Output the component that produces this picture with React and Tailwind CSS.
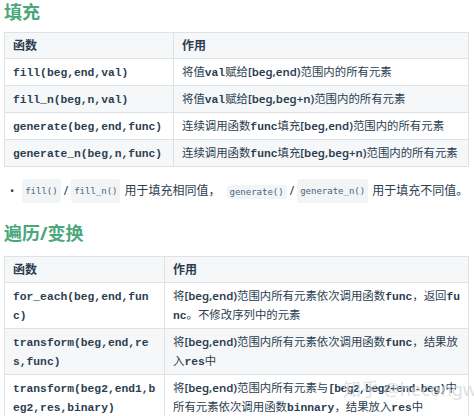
import React from "react";

const sans = { fontFamily: '"Noto Sans", "Noto Sans CJK SC", sans-serif' };

function M({ children, tight }) {
  return (
    <span
      className={tight ? "font-bold text-[11.3px] tracking-[-0.6px]" : "font-bold text-[11.3px]"}
      style={{ fontFamily: '"Liberation Mono", monospace' }}
    >
      {children}
    </span>
  );
}

function L({ children }) {
  return <span className="font-semibold text-[11.4px]">{children}</span>;
}

function IC({ children }) {
  return (
    <code
      className="rounded-[3px] bg-[#f3f4f5] px-[3px] py-[2px] text-[9px] text-[#476582]"
      style={{ fontFamily: '"DejaVu Sans Mono", monospace' }}
    >
      {children}
    </code>
  );
}

function Table({ col, rows }) {
  return (
    <table className="w-[465px] table-fixed border-collapse text-[11.4px] text-[#2c3e50]">
      <colgroup>
        <col style={{ width: col }} />
        <col />
      </colgroup>
      <thead>
        <tr className="bg-[#f6f7f8]">
          <th className="border border-[#dfe2e5] px-2 pt-1 pb-[3px] text-left text-[12px] font-bold leading-[18px]">函数</th>
          <th className="border border-[#dfe2e5] px-2 pt-1 pb-[3px] text-left text-[12px] font-bold leading-[18px]">作用</th>
        </tr>
      </thead>
      <tbody>
        {rows.map((r, i) => (
          <tr key={i} className={i % 2 === 1 ? "bg-[#f6f7f8]" : "bg-white"}>
            <td className="overflow-hidden border border-[#dfe2e5] px-2 pt-1 pb-[3px] align-top leading-[18px] whitespace-nowrap">{r[0]}</td>
            <td className="overflow-hidden border border-[#dfe2e5] px-2 pt-1 pb-[3px] align-top leading-[18px] whitespace-nowrap">{r[1]}</td>
          </tr>
        ))}
      </tbody>
    </table>
  );
}

export default function App() {
  const rows1 = [
    [<M>fill(beg,end,val)</M>, <>将值<M>val</M>赋给<L>[beg,end)</L>范围内的所有元素</>],
    [<M>fill_n(beg,n,val)</M>, <>将值<M>val</M>赋给<L>[beg,beg+n)</L>范围内的所有元素</>],
    [<M>generate(beg,end,func)</M>, <>连续调用函数<M>func</M>填充<L>[beg,end)</L>范围内的所有元素</>],
    [<M>generate_n(beg,n,func)</M>, <>连续调用函数<M>func</M>填充<L>[beg,beg+n)</L>范围内的所有元素</>],
  ];
  const rows2 = [
    [
      <><M>for_each(beg,end,fun</M><br /><M>c)</M></>,
      <>将<L>[beg,end)</L>范围内所有元素依次调用函数<M>func</M>，返回<M>fu</M><br /><M>nc</M>。不修改序列中的元素</>,
    ],
    [
      <><M>transform(beg,end,re</M><br /><M>s,func)</M></>,
      <>将<L>[beg,end)</L>范围内所有元素依次调用函数<M>func</M>，结果放<br />入<M>res</M>中</>,
    ],
    [
      <><M>transform(beg2,end1,b</M><br /><M>eg2,res,binary)</M></>,
      <>将<L>[beg,end)</L>范围内所有元素与<M tight>[beg2,beg2+end-beg)</M>中<br />所有元素依次调用函数<M>binnary</M>，结果放入<M>res</M>中</>,
    ],
  ];
  return (
    <div className="relative h-[416px] w-[474px] overflow-hidden bg-white" style={sans}>
      <div className="px-[4px]">
        <h2 className="pt-[1px] text-[18px] font-bold leading-[22px] text-[#4aa87a]">填充</h2>
        <div className="mt-[9px]">
          <Table col="169px" rows={rows1} />
        </div>
        <div className="mt-[12px] flex items-center whitespace-nowrap pl-[6px] text-[12px] leading-[20px] text-[#2c3e50]">
          <span className="mr-[8px] text-[11px]">•</span>
          <IC>fill()</IC>
          <span className="mx-[3px]">/</span>
          <IC>fill_n()</IC>
          <span className="ml-[4px]">用于填充相同值，</span>
          <span className="ml-[6px]"><IC>generate()</IC></span>
          <span className="mx-[3px]">/</span>
          <IC>generate_n()</IC>
          <span className="ml-[4px]">用于填充不同值。</span>
        </div>
        <h2 className="mt-[19px] text-[18px] font-bold leading-[22px] text-[#4aa87a]">遍历/变换</h2>
        <div className="mt-[12px]">
          <Table col="160px" rows={rows2} />
        </div>
      </div>
      <div className="pointer-events-none absolute left-[343px] top-[378px] whitespace-nowrap text-[18px] leading-[22px] text-[#d4d7da] opacity-75">
        知乎 @hecongwei
      </div>
    </div>
  );
}
